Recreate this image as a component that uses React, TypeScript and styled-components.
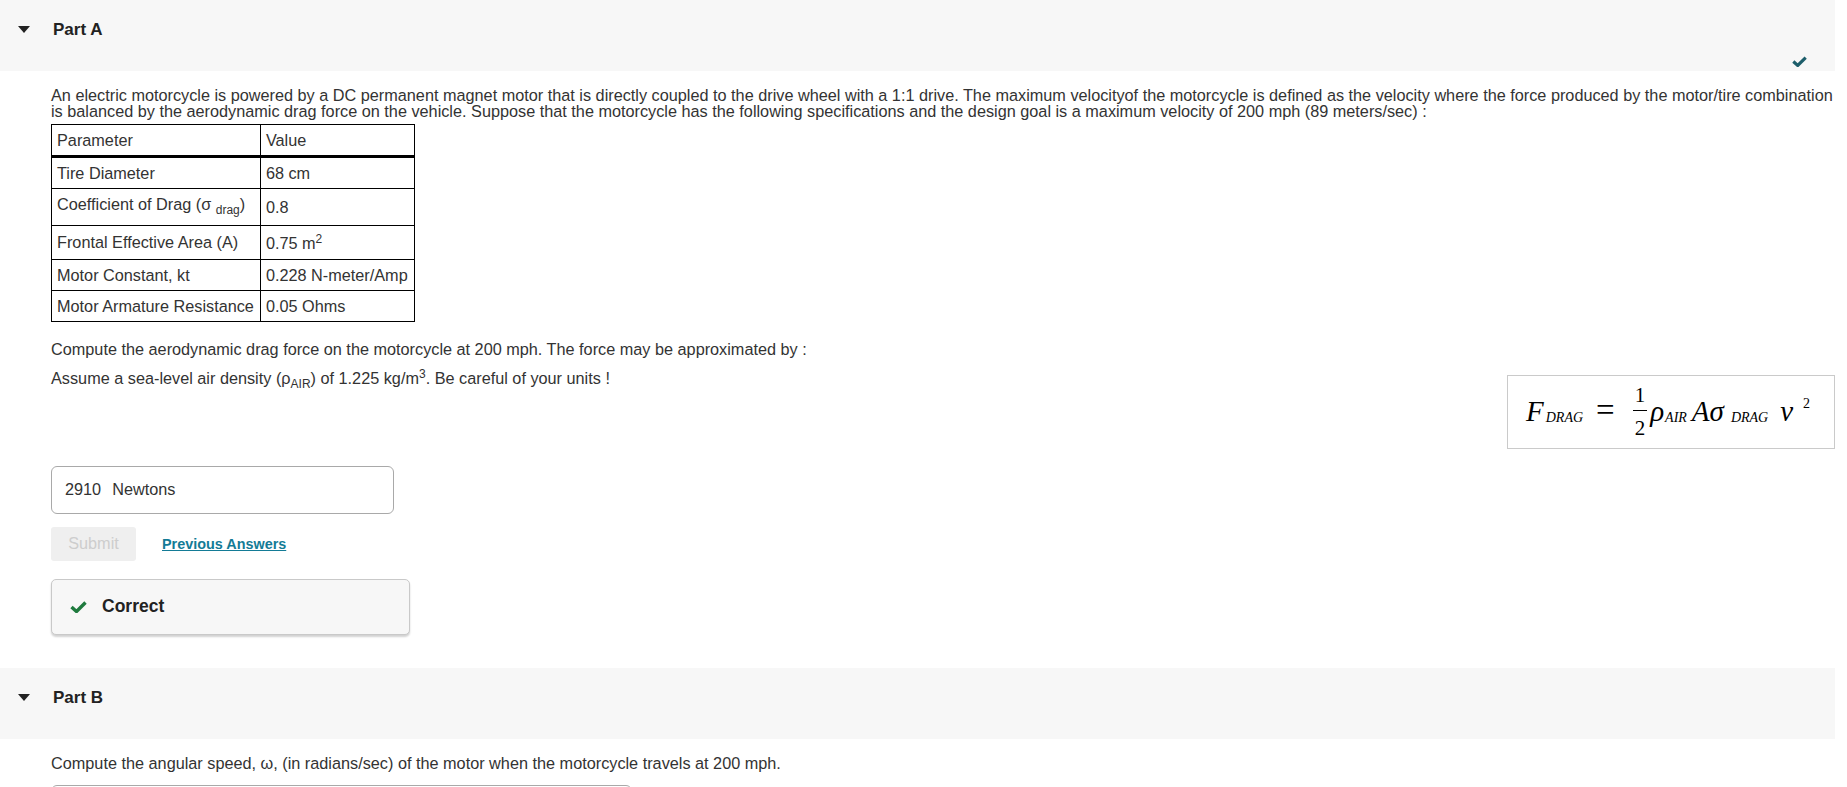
import React from 'react';
import styled, { createGlobalStyle } from 'styled-components';

const GlobalStyle = createGlobalStyle`
    html, body {
        margin: 0;
        padding: 0;
        background: #fff;
        overflow: hidden;
    }
    body {
        font-family: "Liberation Sans", Arial, sans-serif;
        color: #333;
    }
`;

const Page = styled.div`
    width: 1835px;
`;

const PartHeader = styled.div<{ $top?: number }>`
    display: flex;
    align-items: flex-start;
    height: 71px;
    margin-top: ${p => p.$top || 0}px;
    background: #f7f7f7;
`;

const Caret = styled.span`
    width: 0;
    height: 0;
    margin: 26px 0 0 18px;
    border-left: 6px solid transparent;
    border-right: 6px solid transparent;
    border-top: 7px solid #222;
`;

const PartTitle = styled.h2`
    margin: 21px 0 0 23px;
    font-size: 17px;
    line-height: 17px;
    font-weight: bold;
    color: #222;
`;

const HeaderCheck = styled.svg`
    align-self: flex-end;
    margin: 0 28px 4px auto;
`;

const PartBody = styled.div`
    padding-left: 51px;
`;

const Text = styled.p<{ $top: number }>`
    margin: ${p => p.$top}px 0 0;
    font-size: 16.25px;
    line-height: 16px;
    color: #333;

    sub, sup {
        font-size: 12px;
        line-height: 0;
    }
`;

const SpecTable = styled.table`
    border-collapse: separate;
    border-spacing: 0;
    border-top: 1px solid #000;
    border-left: 1px solid #000;
    margin-top: 5px;
    font-size: 16.25px;
    line-height: 16px;
    color: #333;

    sub {
        font-size: 12px;
    }
    sup {
        font-size: 12px;
        line-height: 12px;
    }
`;

const Cell = styled.td`
    border-right: 1px solid #000;
    border-bottom: 1px solid #000;
    padding: 7px 6px 7px 5px;
    white-space: nowrap;
    text-align: left;
    font-weight: normal;
`;

const HeadCell = styled(Cell).attrs({ as: 'th' })`
    border-bottom: 3px solid #000;
`;

const AssumeRow = styled.div`
    display: flex;
    justify-content: space-between;
    align-items: flex-start;
    margin-top: 13px;
`;

const FormulaBox = styled.div`
    box-sizing: border-box;
    width: 328px;
    height: 74px;
    margin-top: 5px;
    padding-left: 18px;
    border: 1px solid #cacaca;
    display: flex;
    align-items: center;
`;

const MathLine = styled.div`
    font-family: "Liberation Serif", "Times New Roman", serif;
    font-style: italic;
    font-size: 29px;
    line-height: 29px;
    color: #000;
    white-space: nowrap;
`;

const MathSub = styled.span<{ $left?: number; $right?: number }>`
    font-size: 14px;
    vertical-align: -1px;
    margin: 0 ${p => p.$right ?? 0}px 0 ${p => p.$left ?? 2}px;
`;

const MathSup = styled.span`
    font-size: 14px;
    vertical-align: 13px;
    font-style: normal;
    margin-left: 10px;
`;

const MathOp = styled.span`
    font-style: normal;
    font-size: 33px;
    margin: 0 18px 0 13px;
`;

const Frac = styled.span`
    display: inline-flex;
    flex-direction: column;
    align-items: center;
    vertical-align: 19px;
    margin-right: 3px;
    font-style: normal;
    font-size: 21px;
    line-height: 18px;
`;

const FracNum = styled.span`
    padding: 0 2px 6px;
`;

const FracDen = styled.span`
    padding: 8px 2px 0;
    border-top: 1px solid #000;
`;

const MathGap = styled.span<{ $w: number }>`
    display: inline-block;
    width: ${p => p.$w}px;
`;

const AnswerField = styled.div<{ $width: number; $top: number }>`
    box-sizing: border-box;
    width: ${p => p.$width}px;
    height: 48px;
    margin-top: ${p => p.$top}px;
    padding-left: 13px;
    border: 1px solid #a9a9a9;
    border-radius: 6px;
    display: flex;
    align-items: center;
    gap: 11px;
    font-size: 16.25px;
    color: #333;
`;

const ActionRow = styled.div`
    display: flex;
    align-items: center;
    gap: 26px;
    margin-top: 13px;
`;

const SubmitButton = styled.button`
    width: 85px;
    height: 34px;
    border: none;
    border-radius: 3px;
    background: #efefef;
    color: #cdcdcd;
    font-family: "Liberation Sans", Arial, sans-serif;
    font-size: 16.25px;
    padding: 0;
`;

const PrevLink = styled.a`
    color: #137b96;
    font-size: 14.4px;
    font-weight: bold;
    text-decoration: underline;
`;

const ResultBox = styled.div`
    box-sizing: border-box;
    width: 359px;
    height: 56px;
    margin-top: 18px;
    padding-left: 18px;
    display: flex;
    align-items: center;
    gap: 15px;
    background: #f7f7f7;
    border: 1px solid #c9c9c9;
    border-radius: 5px;
    box-shadow: 0 2px 2px rgba(0, 0, 0, 0.18);
`;

const ResultText = styled.span`
    font-size: 17.5px;
    font-weight: bold;
    color: #222;
`;

const Check = ({ color, w, h }: { color: string; w: number; h: number }) => (
    <svg width={w} height={h} viewBox="0 0 17 12">
        <path d="M1.5 6 L6.5 10.5 L15.5 1.5" fill="none" stroke={color} strokeWidth="3.4" />
    </svg>
);

function App() {
    return (
        <>
            <GlobalStyle />
            <Page>
                <PartHeader>
                    <Caret />
                    <PartTitle>Part A</PartTitle>
                    <HeaderCheck width="15" height="11" viewBox="0 0 17 12">
                        <path d="M1.5 6 L6.5 10.5 L15.5 1.5" fill="none" stroke="#1d5e6b" strokeWidth="3.6" />
                    </HeaderCheck>
                </PartHeader>
                <PartBody>
                    <Text $top={16}>
                        An electric motorcycle is powered by a DC permanent magnet motor that is directly coupled to the drive wheel with a 1:1 drive. The maximum velocityof the motorcycle is defined as the velocity where the force produced by the motor/tire combination is balanced by the aerodynamic drag force on the vehicle. Suppose that the motorcycle has the following specifications and the design goal is a maximum velocity of 200 mph (89 meters/sec) :
                    </Text>
                    <SpecTable>
                        <thead>
                            <tr>
                                <HeadCell>Parameter</HeadCell>
                                <HeadCell>Value</HeadCell>
                            </tr>
                        </thead>
                        <tbody>
                            <tr>
                                <Cell>Tire Diameter</Cell>
                                <Cell>68 cm</Cell>
                            </tr>
                            <tr>
                                <Cell>Coefficient of Drag (σ <sub>drag</sub>)</Cell>
                                <Cell>0.8</Cell>
                            </tr>
                            <tr>
                                <Cell>Frontal Effective Area (A)</Cell>
                                <Cell>0.75 m<sup>2</sup></Cell>
                            </tr>
                            <tr>
                                <Cell>Motor Constant, kt</Cell>
                                <Cell>0.228 N-meter/Amp</Cell>
                            </tr>
                            <tr>
                                <Cell>Motor Armature Resistance</Cell>
                                <Cell>0.05 Ohms</Cell>
                            </tr>
                        </tbody>
                    </SpecTable>
                    <Text $top={19}>
                        Compute the aerodynamic drag force on the motorcycle at 200 mph. The force may be approximated by :
                    </Text>
                    <AssumeRow>
                        <Text $top={0}>
                            Assume a sea-level air density (ρ<sub>AIR</sub>) of 1.225 kg/m<sup>3</sup>. Be careful of your units !
                        </Text>
                        <FormulaBox>
                            <MathLine>
                                F<MathSub>DRAG</MathSub>
                                <MathOp>=</MathOp>
                                <Frac>
                                    <FracNum>1</FracNum>
                                    <FracDen>2</FracDen>
                                </Frac>
                                ρ<MathSub $left={1} $right={5}>AIR</MathSub>Aσ<MathSub $left={7}>DRAG</MathSub>
                                <MathGap $w={12} />v<MathSup>2</MathSup>
                            </MathLine>
                        </FormulaBox>
                    </AssumeRow>
                    <AnswerField $width={343} $top={17}>
                        <span>2910</span>
                        <span>Newtons</span>
                    </AnswerField>
                    <ActionRow>
                        <SubmitButton disabled>Submit</SubmitButton>
                        <PrevLink href="#">Previous Answers</PrevLink>
                    </ActionRow>
                    <ResultBox>
                        <Check color="#1f7a3e" w={17} h={12} />
                        <ResultText>Correct</ResultText>
                    </ResultBox>
                </PartBody>
                <PartHeader $top={33}>
                    <Caret />
                    <PartTitle>Part B</PartTitle>
                </PartHeader>
                <PartBody>
                    <Text $top={16}>
                        Compute the angular speed, ω, (in radians/sec) of the motor when the motorcycle travels at 200 mph.
                    </Text>
                    <AnswerField $width={581} $top={14} />
                </PartBody>
            </Page>
        </>
    );
}

export default App;
